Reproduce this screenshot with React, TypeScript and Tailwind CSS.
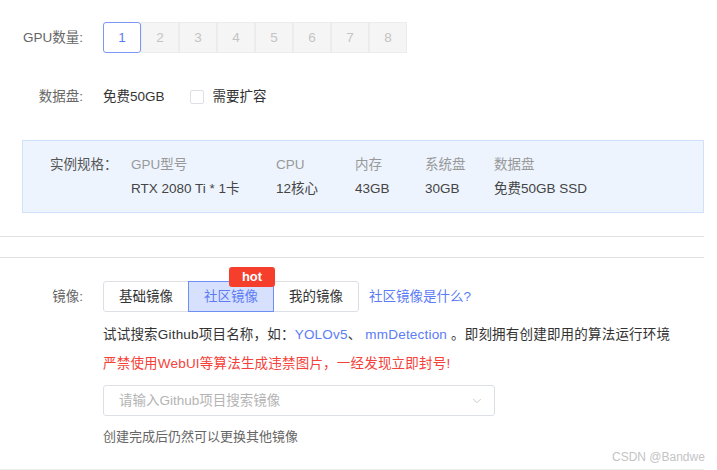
import { useState } from "react";
import { ChevronDown } from "lucide-react";

const FONT = { fontFamily: '"Liberation Sans", "Noto Sans CJK SC", sans-serif' };

const gpuCounts = [1, 2, 3, 4, 5, 6, 7, 8];

const specs = [
  { label: "GPU型号", value: "RTX 2080 Ti * 1卡" },
  { label: "CPU", value: "12核心" },
  { label: "内存", value: "43GB" },
  { label: "系统盘", value: "30GB" },
  { label: "数据盘", value: "免费50GB SSD" },
];

const imageTabs = ["基础镜像", "社区镜像", "我的镜像"];

function FieldLabel({ children }: { children: React.ReactNode }) {
  return <div className="w-[84px] shrink-0 text-right text-[#666] pr-px">{children}</div>;
}

export default function App() {
  const [gpu, setGpu] = useState(1);
  const [tab, setTab] = useState("社区镜像");
  const [expand, setExpand] = useState(false);

  return (
    <div className="w-[717px] h-[470px] bg-white overflow-hidden relative text-[13.5px] leading-5 text-[#333]" style={FONT}>
      <div className="w-[704px]">
        {/* GPU count */}
        <div className="flex items-center pt-[22px]">
          <FieldLabel>GPU数量:</FieldLabel>
          <div className="flex ml-[19px]">
            {gpuCounts.map(n => (
              <button
                key={n}
                onClick={() => setGpu(n)}
                className={`w-[38px] h-[31px] flex items-center justify-center border ${
                  n === gpu
                    ? "bg-white border-[#7d97f6] text-[#5b7cf5] rounded-[3px]"
                    : "bg-[#f5f5f5] border-[#ececec] text-[#c4c4c4]"
                }`}
              >
                {n}
              </button>
            ))}
          </div>
        </div>

        {/* data disk */}
        <div className="flex items-center h-5 mt-[34px]">
          <FieldLabel>数据盘:</FieldLabel>
          <span className="ml-[19px]">免费50GB</span>
          <label className="flex items-center ml-[25px] cursor-pointer">
            <input type="checkbox" checked={expand} onChange={e => setExpand(e.target.checked)} className="sr-only" />
            <span className="w-[14px] h-[14px] border border-[#dcdfe6] rounded-[2px] bg-white" />
            <span className="ml-[9px]">需要扩容</span>
          </label>
        </div>

        {/* instance spec */}
        <div className="ml-[22px] mt-[33px] border border-[#cfe2fb] bg-[#edf4fe] pt-[14px] pb-[13px] pl-[27px]">
          <div className="grid grid-cols-[81px_145px_79px_70px_69px_auto] gap-y-1">
            <div className="text-[#555] row-span-2">实例规格：</div>
            {specs.map(s => (
              <div key={s.label} className="text-[#999]">{s.label}</div>
            ))}
            {specs.map(s => (
              <div key={s.value} className="text-[#444]">{s.value}</div>
            ))}
          </div>
        </div>

        <div className="mt-[23px] border-t border-[#e2e2e2]" />
        <div className="mt-[20px] border-t border-[#e2e2e2]" />

        {/* image */}
        <div className="flex items-center mt-[23px]">
          <FieldLabel>镜像:</FieldLabel>
          <div className="flex ml-[19px]">
            {imageTabs.map((t, i) => (
              <button
                key={t}
                onClick={() => setTab(t)}
                className={`relative w-[86px] h-[31px] flex items-center justify-center border ${i > 0 ? "-ml-px" : ""} ${
                  i === 0 ? "rounded-l-[3px]" : i === imageTabs.length - 1 ? "rounded-r-[3px]" : ""
                } ${t === tab ? "bg-[#d7e0fd] border-[#6e8ff6] text-[#5b7cf5] z-10" : "bg-white border-[#dcdfe6] text-[#333]"}`}
              >
                {t}
                {t === "社区镜像" && (
                  <span className="absolute -top-[15px] left-[40px] w-[46px] h-[20px] bg-[#f53e2c] text-white text-[13px] font-bold leading-[20px] rounded-[3px] text-center">
                    hot
                  </span>
                )}
              </button>
            ))}
          </div>
          <a className="ml-[10px] text-[#5b7cf5] cursor-pointer">社区镜像是什么?</a>
        </div>

        <div className="ml-[103px] mt-[13px]">
          <p className="tracking-[0.2px]">
            试试搜索Github项目名称，如：<span className="text-[#5b7cf5]">YOLOv5</span>、 <span className="text-[#5b7cf5]">mmDetection</span> 。即刻拥有创建即用的算法运行环境
          </p>
          <p className="mt-[9px] text-[#f5413a] tracking-[0.2px]">严禁使用WebUI等算法生成违禁图片，一经发现立即封号!</p>

          <div className="mt-[11px] w-[392px] h-[31px] border border-[#dcdfe6] rounded-[3px] flex items-center justify-between pl-[15px] pr-[10px]">
            <span className="text-[#b4b4b4]">请输入Github项目搜索镜像</span>
            <ChevronDown className="w-[14px] h-[14px] text-[#c0c4cc]" strokeWidth={1.5} />
          </div>

          <p className="mt-[11px] text-[#666] text-[13px]">创建完成后仍然可以更换其他镜像</p>
        </div>

        <div className="mt-[22px] border-t-2 border-[#ececec]" />
      </div>

      <div className="absolute left-[612px] top-[447px] text-[12px] leading-5 text-[#c4c4c4]">CSDN @Bandwe</div>
    </div>
  );
}
